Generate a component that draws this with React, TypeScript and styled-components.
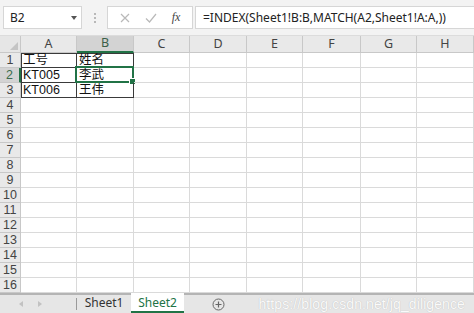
import { createGlobalStyle } from 'styled-components';
import styled from 'styled-components';

const GlobalStyle = createGlobalStyle`
	html, body {
		margin: 0;
		padding: 0;
		background: #ffffff;
	}
	body {
		font-family: "Noto Sans", "Noto Sans CJK SC", sans-serif;
		width: 474px;
		height: 313px;
		overflow: hidden;
	}
`;

const COLS = ['A', 'B', 'C', 'D', 'E', 'F', 'G', 'H'];
const COL_WIDTHS = '21px 56px 57px 56px 57px 56px 58px 56px 57px';
const ROW_COUNT = 16;

const DATA: Record<string, string> = {
	A1: '工号',
	B1: '姓名',
	A2: 'KT005',
	B2: '李武',
	A3: 'KT006',
	B3: '王伟'
};

const Page = styled.div`
	display: flex;
	flex-direction: column;
	width: 474px;
	height: 313px;
	overflow: hidden;
`;

const Toolbar = styled.div`
	height: 36px;
	box-sizing: border-box;
	background: #f3f3f3;
	display: flex;
	align-items: center;
	padding: 0 0 0 3px;
	border-bottom: 1px solid #dcdcdc;
`;

const NameBox = styled.div`
	width: 79px;
	height: 23px;
	box-sizing: border-box;
	background: #fff;
	border: 1px solid #d6d6d6;
	display: flex;
	align-items: center;
	justify-content: space-between;
	padding: 0 4px 0 6px;
	font-size: 12px;
	color: #222;
`;

const Caret = styled.span`
	width: 0;
	height: 0;
	border-left: 3px solid transparent;
	border-right: 3px solid transparent;
	border-top: 4px solid #555;
`;

const Grip = styled.div`
	width: 25px;
	display: flex;
	flex-direction: column;
	align-items: center;
	gap: 2px;
`;

const GripDot = styled.span`
	width: 2px;
	height: 2px;
	background: #b8b8b8;
`;

const FxBox = styled.div`
	width: 86px;
	height: 23px;
	box-sizing: border-box;
	background: #fff;
	border: 1px solid #d6d6d6;
	display: flex;
	align-items: center;
	justify-content: space-around;
	padding: 0 4px;
`;

const FxLabel = styled.span`
	font-family: "Liberation Serif", serif;
	font-style: italic;
	font-size: 12px;
	color: #444;
`;

const FormulaBox = styled.div`
	flex: 1;
	height: 23px;
	margin-left: 2px;
	box-sizing: border-box;
	background: #fff;
	border: 1px solid #d6d6d6;
	border-right: none;
	display: flex;
	align-items: center;
	padding-left: 7px;
	font-size: 12px;
	color: #222;
	white-space: nowrap;
`;

const Grid = styled.div`
	display: grid;
	grid-template-columns: ${COL_WIDTHS};
	grid-template-rows: 17px repeat(${ROW_COUNT}, 15px);
`;

const Corner = styled.div`
	background: #e6e6e6;
	border-right: 1px solid #c8c8c8;
	border-bottom: 1px solid #c8c8c8;
	box-sizing: border-box;
	position: relative;
	&::after {
		content: '';
		position: absolute;
		right: 2px;
		bottom: 2px;
		width: 0;
		height: 0;
		border-left: 8px solid transparent;
		border-bottom: 8px solid #c4c4c4;
	}
`;

const ColHeader = styled.div<{ $active?: boolean }>`
	background: ${({ $active }) => ($active ? '#d3d3d3' : '#e9e9e9')};
	border-right: 1px solid #c8c8c8;
	border-bottom: ${({ $active }) => ($active ? '2px solid #217346' : '1px solid #c8c8c8')};
	box-sizing: border-box;
	display: flex;
	align-items: center;
	justify-content: center;
	font-size: 12.5px;
	line-height: 1;
	color: ${({ $active }) => ($active ? '#3a5f48' : '#444')};
`;

const RowHeader = styled.div<{ $active?: boolean }>`
	background: ${({ $active }) => ($active ? '#d3d3d3' : '#e9e9e9')};
	border-right: ${({ $active }) => ($active ? '2px solid #217346' : '1px solid #c8c8c8')};
	border-bottom: 1px solid #c8c8c8;
	box-sizing: border-box;
	display: flex;
	align-items: center;
	justify-content: center;
	font-family: "Liberation Sans", sans-serif;
	font-size: 12.5px;
	line-height: 1;
	color: ${({ $active }) => ($active ? '#3a6b4c' : '#444')};
`;

const Cell = styled.div<{ $boxed?: boolean; $top?: boolean; $left?: boolean }>`
	position: relative;
	box-sizing: border-box;
	border-right: 1px solid ${({ $boxed }) => ($boxed ? '#3a3a3a' : '#dadada')};
	border-bottom: 1px solid ${({ $boxed }) => ($boxed ? '#3a3a3a' : '#dadada')};
	box-shadow: ${({ $top, $left }) =>
		[$top ? 'inset 0 1px 0 #3a3a3a' : '', $left ? 'inset 1px 0 0 #3a3a3a' : '']
			.filter(Boolean)
			.join(', ') || 'none'};
	display: flex;
	align-items: center;
	font-family: "Liberation Sans", "Noto Sans CJK SC", sans-serif;
	font-size: 12.5px;
	line-height: 1;
	color: #111;
	padding-left: 2px;
	white-space: nowrap;
`;

const Selection = styled.div`
	position: absolute;
	left: -2px;
	top: -2px;
	right: -1px;
	bottom: -1px;
	border: 2px solid #217346;
	pointer-events: none;
	&::after {
		content: '';
		position: absolute;
		right: -4px;
		bottom: -4px;
		width: 5px;
		height: 5px;
		background: #217346;
		border: 1px solid #fff;
	}
`;

const TabBar = styled.div`
	flex: 1;
	background: #e6e6e6;
	border-top: 2px solid #b4b4b4;
	display: flex;
	align-items: stretch;
	font-size: 12px;
	position: relative;
`;

const NavArea = styled.div`
	width: 77px;
	display: flex;
	align-items: center;
	padding-left: 19px;
	gap: 15px;
	box-sizing: border-box;
	border-right: 1px solid #9a9a9a;
	margin: 3px 0;
`;

const NavArrow = styled.span<{ $dir: 'l' | 'r' }>`
	width: 0;
	height: 0;
	border-top: 3px solid transparent;
	border-bottom: 3px solid transparent;
	${({ $dir }) => ($dir === 'l' ? 'border-right: 4px solid #c2c2c2;' : 'border-left: 4px solid #c2c2c2;')}
`;

const Tab = styled.div<{ $active?: boolean }>`
	width: ${({ $active }) => ($active ? '53px' : '54px')};
	display: flex;
	align-items: center;
	justify-content: center;
	box-sizing: border-box;
	margin-top: -2px;
	background: ${({ $active }) => ($active ? '#ffffff' : 'transparent')};
	color: ${({ $active }) => ($active ? '#217346' : '#333')};
	border-bottom: ${({ $active }) => ($active ? '2px solid #217346' : '2px solid transparent')};
`;

const AddButton = styled.div`
	width: 68px;
	display: flex;
	align-items: center;
	justify-content: center;
`;

const Watermark = styled.div`
	position: absolute;
	right: 9px;
	top: 0;
	bottom: 0;
	display: flex;
	align-items: center;
	font-family: "Liberation Sans", sans-serif;
	font-size: 14px;
	color: #fafafa;
	text-shadow: 0 0 1px #b0b0b0;
	letter-spacing: 0.1px;
`;

export default function App() {
	const rows = Array.from({ length: ROW_COUNT }, (_, i) => i + 1);
	return (
		<Page>
			<GlobalStyle />
			<Toolbar>
				<NameBox>
					<span>B2</span>
					<Caret />
				</NameBox>
				<Grip>
					<GripDot />
					<GripDot />
					<GripDot />
				</Grip>
				<FxBox>
					<svg width="10" height="10" viewBox="0 0 10 10">
						<path d="M1 1 L9 9 M9 1 L1 9" stroke="#b9b9b9" strokeWidth="1.2" fill="none" />
					</svg>
					<svg width="12" height="10" viewBox="0 0 12 10">
						<path d="M1 5.5 L4.5 9 L11 1" stroke="#b9b9b9" strokeWidth="1.2" fill="none" />
					</svg>
					<FxLabel>fx</FxLabel>
				</FxBox>
				<FormulaBox>=INDEX(Sheet1!B:B,MATCH(A2,Sheet1!A:A,))</FormulaBox>
			</Toolbar>
			<Grid>
				<Corner />
				{COLS.map((c) => (
					<ColHeader key={c} $active={c === 'B'}>
						{c}
					</ColHeader>
				))}
				{rows.map((r) => [
					<RowHeader key={`h${r}`} $active={r === 2}>
						{r}
					</RowHeader>,
					...COLS.map((c) => {
						const ref = `${c}${r}`;
						const boxed = r <= 3 && (c === 'A' || c === 'B');
						return (
							<Cell key={ref} $boxed={boxed} $top={boxed && r === 1} $left={boxed && c === 'A'}>
								{DATA[ref]}
								{ref === 'B2' && <Selection />}
							</Cell>
						);
					})
				])}
			</Grid>
			<TabBar>
				<NavArea>
					<NavArrow $dir="l" />
					<NavArrow $dir="r" />
				</NavArea>
				<Tab>Sheet1</Tab>
				<Tab $active>Sheet2</Tab>
				<AddButton>
					<svg width="13" height="13" viewBox="0 0 13 13">
						<circle cx="6.5" cy="6.5" r="5.5" stroke="#666" strokeWidth="1" fill="none" />
						<path d="M6.5 3.5 V9.5 M3.5 6.5 H9.5" stroke="#666" strokeWidth="1.2" />
					</svg>
				</AddButton>
				<Watermark>https://blog.csdn.net/jq_diligence</Watermark>
			</TabBar>
		</Page>
	);
}
